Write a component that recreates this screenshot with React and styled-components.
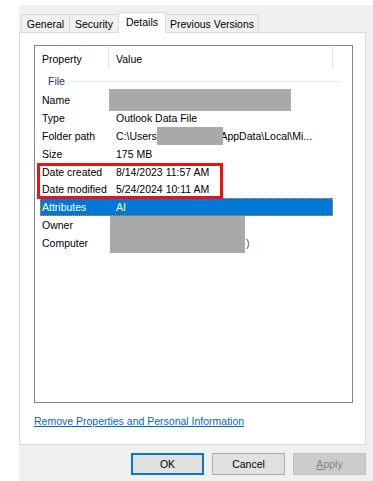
import styled, { createGlobalStyle } from 'styled-components';

const Global = createGlobalStyle`
  body {
    margin: 0;
    background: #ffffff;
    font-family: "Liberation Sans", Arial, sans-serif;
    font-size: 10.5px;
    color: #000000;
  }
`

const Dialog = styled.div`
  margin: 5px 0 0 19px;
  width: 354px;
  height: 476px;
  background: #f0f0f0;
  box-sizing: border-box;
  display: flex;
  flex-direction: column;
`

const TabStrip = styled.div`
  display: flex;
  align-items: flex-end;
  height: 20px;
  margin-top: 7px;
  padding-left: 2px;
`

const Tab = styled.div`
  position: relative;
  box-sizing: border-box;
  width: ${p => p.$w}px;
  height: ${p => (p.$active ? 21 : 18)}px;
  margin-left: ${p => (p.$first ? 0 : -1)}px;
  margin-bottom: ${p => (p.$active ? -1 : 0)}px;
  z-index: ${p => (p.$active ? 2 : 0)};
  border: 1px solid #d9d9d9;
  border-bottom: none;
  background: ${p => (p.$active ? '#ffffff' : '#f0f0f0')};
  display: flex;
  align-items: center;
  justify-content: center;
  padding-bottom: ${p => (p.$active ? 3 : 0)}px;
  white-space: nowrap;
`

const Panel = styled.div`
  box-sizing: border-box;
  width: 347px;
  height: 413px;
  border: 1px solid #d9d9d9;
  background: #ffffff;
  padding: 12px 0 0 14px;
  position: relative;
  z-index: 1;
`

const ListBox = styled.div`
  position: relative;
  box-sizing: border-box;
  width: 319px;
  height: 358px;
  border: 1px solid #828790;
  background: #ffffff;
`

const Header = styled.div`
  display: flex;
  height: 25px;
`

const HeadCell = styled.div`
  box-sizing: border-box;
  width: ${p => p.$w}px;
  padding-left: 7px;
  display: flex;
  align-items: center;
  border-right: ${p => (p.$last ? 'none' : '1px solid #e5e5e5')};
  margin: 1px 0;
`

const Group = styled.div`
  display: flex;
  align-items: center;
  height: 20px;
  padding-left: 13px;
  color: #1e3287;
  &::after {
    content: "";
    flex: 1;
    height: 1px;
    background: #e2e6f0;
    margin: 1px 11px 0 6px;
  }
`

const Row = styled.div`
  box-sizing: border-box;
  display: flex;
  align-items: center;
  height: 17.9px;
  width: 293px;
  margin-left: 5px;
  background: ${p => (p.$selected ? '#0078d7' : 'transparent')};
  color: ${p => (p.$selected ? '#ffffff' : '#000000')};
  border: 1px ${p => (p.$selected ? 'dotted #ff8c00' : 'solid transparent')};
  white-space: nowrap;
`

const Label = styled.div`
  width: 74px;
  padding-left: 1px;
`

const Value = styled.div`
  flex: 1;
  overflow: hidden;
`

const Tail = styled.span`
  margin-left: 130px;
  color: #3a4a8a;
`

const Redact = styled.div`
  position: absolute;
  background: #a9a9a9;
  left: ${p => p.$x}px;
  top: ${p => p.$y}px;
  width: ${p => p.$w}px;
  height: ${p => p.$h}px;
`

const Highlight = styled.div`
  position: absolute;
  box-sizing: border-box;
  left: 2px;
  top: 117px;
  width: 186px;
  height: 36px;
  border: 3px solid #ee1111;
`

const Link = styled.a`
  display: block;
  margin-top: 11px;
  line-height: 14px;
  color: #0066cc;
  text-decoration: underline;
  cursor: pointer;
`

const Buttons = styled.div`
  display: flex;
  justify-content: flex-end;
  gap: 8px;
  margin-top: 8px;
  padding-right: 7px;
`

const Button = styled.button`
  box-sizing: border-box;
  width: 73px;
  height: 22px;
  font: inherit;
  padding: 0;
  background: ${p => (p.$disabled ? '#cccccc' : '#e1e1e1')};
  color: ${p => (p.$disabled ? '#838383' : '#000000')};
  border: ${p => (p.$primary ? '2px solid #0078d7' : p.$disabled ? '1px solid #bfbfbf' : '1px solid #adadad')};
`

const rows = [
  ['Name', ''],
  ['Type', 'Outlook Data File'],
  ['Folder path', 'C:\\Users\\xxxxxxxxxxx\\AppData\\Local\\Mi...'],
  ['Size', '175 MB'],
  ['Date created', '8/14/2023 11:57 AM'],
  ['Date modified', '5/24/2024 10:11 AM'],
  ['Attributes', 'AI'],
  ['Owner', ''],
]

const tabs = [
  ['General', 49],
  ['Security', 50],
  ['Details', 48],
  ['Previous Versions', 94],
]

export default function App() {
  return (
    <>
      <Global />
      <Dialog>
        <TabStrip>
          {tabs.map(([t, w], i) => (
            <Tab key={t} $w={w} $first={i === 0} $active={t === 'Details'}>{t}</Tab>
          ))}
        </TabStrip>
        <Panel>
          <ListBox>
            <Header>
              <HeadCell $w={74}>Property</HeadCell>
              <HeadCell $w={224}>Value</HeadCell>
              <HeadCell $w={19} $last />
            </Header>
            <Group>File</Group>
            {rows.map(([k, v]) => (
              <Row key={k} $selected={k === 'Attributes'}>
                <Label>{k}</Label>
                <Value>{v}</Value>
              </Row>
            ))}
            <Row>
              <Label>Computer</Label>
              <Value><Tail>)</Tail></Value>
            </Row>
            <Redact $x={74} $y={43} $w={182} $h={22} />
            <Redact $x={122} $y={81} $w={66} $h={18} />
            <Redact $x={75} $y={170} $w={135} $h={37} />
            <Highlight />
          </ListBox>
          <Link>Remove Properties and Personal Information</Link>
        </Panel>
        <Buttons>
          <Button $primary>OK</Button>
          <Button>Cancel</Button>
          <Button $disabled><u>A</u>pply</Button>
        </Buttons>
      </Dialog>
    </>
  )
}
